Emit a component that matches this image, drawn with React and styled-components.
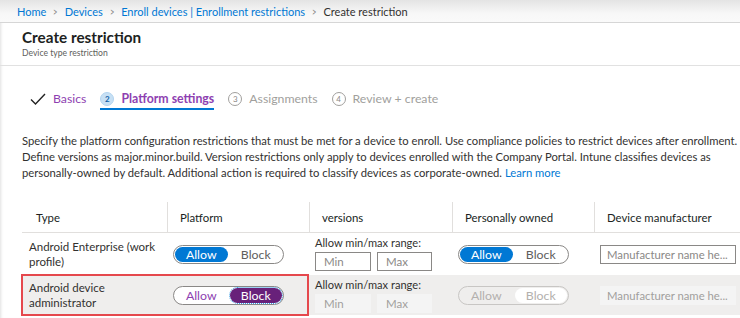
import React from "react";
import styled, { createGlobalStyle } from "styled-components";

const GlobalStyle = createGlobalStyle`
  body {
    margin: 0;
    background: #fff;
    font-family: Lato, "Noto Sans", Arial, sans-serif;
    color: #323130;
  }
`;

const columns = "146px 142px 143px 142px 1fr";

const Check = () => (
  <svg width="16" height="12" viewBox="0 0 16 12">
    <path d="M1 6.5 L5.5 11 L15 1" fill="none" stroke="#222" strokeWidth="1.4" />
  </svg>
);

const App = () => {
  return (
    <>
      <GlobalStyle />
      <Page>
        <Breadcrumb>
          <Crumb>Home</Crumb>
          <Sep>&gt;</Sep>
          <Crumb>Devices</Crumb>
          <Sep>&gt;</Sep>
          <Crumb>Enroll devices | Enrollment restrictions</Crumb>
          <Sep>&gt;</Sep>
          <Current>Create restriction</Current>
        </Breadcrumb>

        <Header>
          <Title>Create restriction</Title>
          <Subtitle>Device type restriction</Subtitle>
        </Header>

        <Tabs>
          <Tab>
            <Check />
            <TabLabel $state="done">Basics</TabLabel>
          </Tab>
          <Tab $active>
            <StepNum $active>2</StepNum>
            <TabLabel $state="active">Platform settings</TabLabel>
          </Tab>
          <Tab>
            <StepNum>3</StepNum>
            <TabLabel>Assignments</TabLabel>
          </Tab>
          <Tab>
            <StepNum>4</StepNum>
            <TabLabel>Review + create</TabLabel>
          </Tab>
        </Tabs>

        <Intro>
          Specify the platform configuration restrictions that must be met for a device to enroll. Use
          compliance policies to restrict devices after enrollment.
          <br />
          Define versions as major.minor.build. Version restrictions only apply to devices enrolled with
          the Company Portal. Intune classifies devices as
          <br />
          personally-owned by default. Additional action is required to classify devices as
          corporate-owned. <Link>Learn more</Link>
        </Intro>

        <Table>
          <HeadRow>
            <HeadCell $first>Type</HeadCell>
            <HeadCell>Platform</HeadCell>
            <HeadCell>versions</HeadCell>
            <HeadCell>Personally owned</HeadCell>
            <HeadCell $last>Device manufacturer</HeadCell>
          </HeadRow>

          <Row>
            <TypeCell>Android Enterprise (work profile)</TypeCell>
            <Cell>
              <Toggle>
                <Segment $on>Allow</Segment>
                <Segment>Block</Segment>
              </Toggle>
            </Cell>
            <VersionCell>
              <RangeLabel>Allow min/max range:</RangeLabel>
              <Inputs>
                <SmallInput placeholder="Min" $w={56} />
                <SmallInput placeholder="Max" $w={55} />
              </Inputs>
            </VersionCell>
            <Cell>
              <Toggle>
                <Segment $on>Allow</Segment>
                <Segment>Block</Segment>
              </Toggle>
            </Cell>
            <Cell>
              <TextInput placeholder="Manufacturer name he..." />
            </Cell>
          </Row>

          <Row $grey>
            <Highlight>
              <TypeCell>Android device administrator</TypeCell>
              <Cell>
                <Toggle>
                  <Segment $variant="white">Allow</Segment>
                  <Segment $variant="purple">Block</Segment>
                </Toggle>
              </Cell>
            </Highlight>
            <VersionCell>
              <RangeLabel>Allow min/max range:</RangeLabel>
              <Inputs>
                <SmallInput placeholder="Min" $w={56} disabled />
                <SmallInput placeholder="Max" $w={55} disabled />
              </Inputs>
            </VersionCell>
            <Cell>
              <Toggle $disabled>
                <Segment $variant="disabled">Allow</Segment>
                <Segment $variant="disabledOn">Block</Segment>
              </Toggle>
            </Cell>
            <Cell>
              <TextInput placeholder="Manufacturer name he..." disabled />
            </Cell>
          </Row>
        </Table>
      </Page>
    </>
  );
};

export default App;

const Page = styled.div`
  width: 740px;
  height: 318px;
  overflow: hidden;
  box-shadow: inset 3px 0 3px -2px rgba(0, 0, 0, 0.12);
`;

const Breadcrumb = styled.div`
  height: 22px;
  display: flex;
  align-items: center;
  gap: 6px;
  padding-left: 17px;
  background: linear-gradient(#e4e4e4, #f7f7f7 60%, #fafafa);
  border-bottom: 1px solid #d6d6d6;
  font-size: 11px;
`;

const Crumb = styled.span`
  color: #0078d4;
`;

const Sep = styled.span`
  color: #8a8886;
  font-size: 11px;
  transform: scaleX(0.7);
`;

const Current = styled.span`
  color: #323130;
`;

const Header = styled.div`
  height: 38px;
  padding: 4px 0 0 22px;
  border-bottom: 1px solid #e1e1e1;
`;

const Title = styled.div`
  font-size: 15.3px;
  font-weight: 700;
  color: #201f1e;
  line-height: 21px;
`;

const Subtitle = styled.div`
  font-size: 8.6px;
  color: #605e5c;
  line-height: 11px;
`;

const Tabs = styled.div`
  display: flex;
  gap: 14px;
  padding: 23px 0 0 30px;
  height: 21px;
`;

const Tab = styled.div`
  display: flex;
  align-items: center;
  gap: 7px;
  height: 19px;
  border-bottom: 2px solid ${(p) => (p.$active ? "#0078d4" : "transparent")};
`;

const TabLabel = styled.span`
  font-size: 12.3px;
  font-weight: ${(p) => (p.$state === "active" ? 700 : 400)};
  color: ${(p) => (p.$state ? "#8e3fb1" : "#a19f9d")};
`;

const StepNum = styled.span`
  width: 14px;
  height: 14px;
  border-radius: 50%;
  box-sizing: border-box;
  display: flex;
  align-items: center;
  justify-content: center;
  font-size: 8px;
  font-weight: ${(p) => (p.$active ? 700 : 400)};
  color: ${(p) => (p.$active ? "#0f5fa8" : "#8a8886")};
  background: ${(p) => (p.$active ? "#c7e0f4" : "#fff")};
  border: 1px solid ${(p) => (p.$active ? "#b3d4ef" : "#a19f9d")};
`;

const Intro = styled.p`
  margin: 23px 0 0 22px;
  width: 730px;
  white-space: nowrap;
  font-size: 11.25px;
  line-height: 16px;
  color: #323130;
`;

const Link = styled.span`
  color: #0078d4;
`;

const Table = styled.div`
  margin: 21px 0 0 22px;
`;

const HeadRow = styled.div`
  display: grid;
  grid-template-columns: ${columns};
  height: 30px;
  border-bottom: 1px solid #e1dfdd;
`;

const HeadCell = styled.div`
  display: flex;
  align-items: center;
  padding-left: ${(p) => (p.$first ? "14px" : "12px")};
  border-right: ${(p) => (p.$last ? "none" : "1px solid #e1dfdd")};
  font-size: 11.4px;
  color: #201f1e;
`;

const Row = styled.div`
  display: grid;
  grid-template-columns: ${columns};
  height: ${(p) => (p.$grey ? "40px" : "42px")};
  background: ${(p) => (p.$grey ? "#efeeed" : "#fff")};
`;

const Highlight = styled.div`
  grid-column: span 2;
  display: grid;
  grid-template-columns: 146px 142px;
  outline: 2px solid #e5484d;
  outline-offset: -1px;
  margin-right: 2px;
`;

const Cell = styled.div`
  display: flex;
  align-items: center;
  padding-left: 5px;
`;

const TypeCell = styled.div`
  display: flex;
  align-items: center;
  padding: 0 4px 0 7px;
  font-size: 11.5px;
  line-height: 15.5px;
  color: #323130;
`;

const VersionCell = styled.div`
  display: flex;
  flex-direction: column;
  padding: 3px 0 0 5px;
`;

const RangeLabel = styled.div`
  font-size: 11.1px;
  line-height: 14px;
  color: #323130;
`;

const Inputs = styled.div`
  display: flex;
  gap: 6px;
  margin-top: 2px;
`;

const SmallInput = styled.input`
  width: ${(p) => p.$w}px;
  height: 19px;
  box-sizing: border-box;
  border: 1px solid #8a8886;
  padding: 0 8px;
  font-family: inherit;
  font-size: 11.5px;
  background: #fff;

  &::placeholder {
    color: #8a8886;
  }

  &:disabled {
    border-color: #f4f4f4;
    background: #f4f4f4;
  }

  &:disabled::placeholder {
    color: #a19f9d;
  }
`;

const TextInput = styled.input`
  width: 136px;
  height: 19px;
  box-sizing: border-box;
  border: 1px solid #8a8886;
  padding: 0 6px;
  font-family: inherit;
  font-size: 11.3px;
  background: #fff;

  &::placeholder {
    color: #8a8886;
  }

  &:disabled {
    border-color: #f4f4f4;
    background: #f4f4f4;
  }

  &:disabled::placeholder {
    color: #a19f9d;
  }
`;

const Toggle = styled.div`
  width: 111px;
  height: 19px;
  box-sizing: border-box;
  display: grid;
  grid-template-columns: 1fr 1fr;
  gap: 2px;
  padding: 1px;
  border: 1px solid ${(p) => (p.$disabled ? "#c8c6c4" : "#8a8886")};
  border-radius: 10px;
  background: ${(p) => (p.$disabled ? "transparent" : "#fff")};
`;

const segmentColors = {
  on: { bg: "#0078d4", fg: "#fff" },
  off: { bg: "transparent", fg: "#605e5c" },
  white: { bg: "#fff", fg: "#8e3fb1" },
  purple: { bg: "#68217a", fg: "#fff" },
  disabled: { bg: "transparent", fg: "#b3b0ad" },
  disabledOn: { bg: "#fff", fg: "#b3b0ad" },
};

const Segment = styled.div`
  display: flex;
  align-items: center;
  justify-content: center;
  border-radius: 8px;
  font-size: 12.3px;
  line-height: 15px;
  background: ${(p) => segmentColors[p.$variant || (p.$on ? "on" : "off")].bg};
  color: ${(p) => segmentColors[p.$variant || (p.$on ? "on" : "off")].fg};
  outline: ${(p) => (p.$variant === "purple" ? "1px dotted #3aa0e8" : "none")};
`;
